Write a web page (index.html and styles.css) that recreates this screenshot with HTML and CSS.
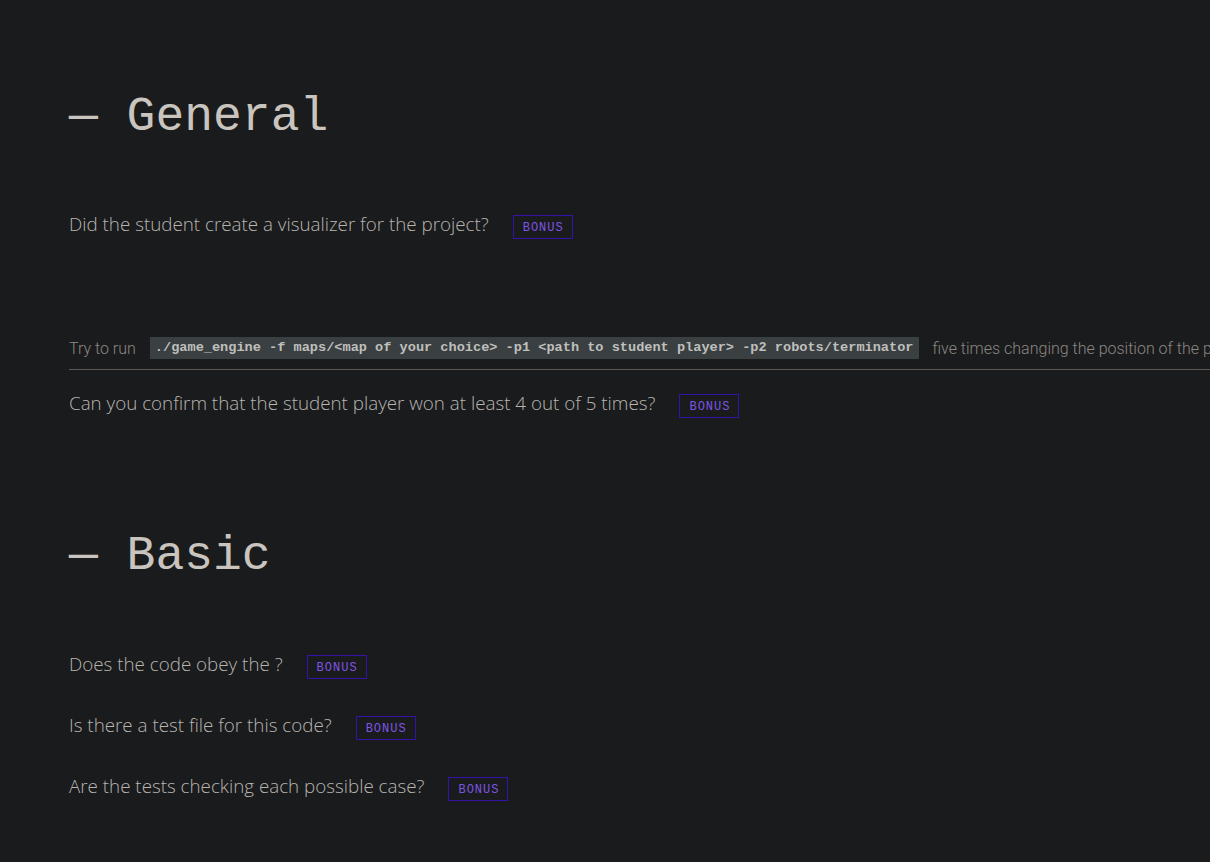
FILE: index.html
```html
<!DOCTYPE html>
<html lang="en">
<head>
<meta charset="utf-8">
<title>Audit</title>
<link rel="stylesheet" href="styles.css">
</head>
<body>
<main class="page">
  <section class="section">
    <h2 class="section-title">— General</h2>
    <div class="question first">
      <span class="question-text">Did the student create a visualizer for the project?</span>
      <span class="badge">BONUS</span>
    </div>
    <div class="check">
      <div class="instructions">
        <span class="instr-text">Try to run</span>
        <code class="code">./game_engine -f maps/&lt;map of your choice&gt; -p1 &lt;path to student player&gt; -p2 robots/terminator</code>
        <span class="instr-text">five times changing the position of the players each time so that the student player can be the p1 and the p2.</span>
      </div>
      <div class="question after-rule">
        <span class="question-text">Can you confirm that the student player won at least 4 out of 5 times?</span>
        <span class="badge">BONUS</span>
      </div>
    </div>
  </section>
  <section class="section second">
    <h2 class="section-title">— Basic</h2>
    <div class="question-list">
      <div class="question">
        <span class="question-text">Does the code obey the ?</span>
        <span class="badge">BONUS</span>
      </div>
      <div class="question">
        <span class="question-text">Is there a test file for this code?</span>
        <span class="badge">BONUS</span>
      </div>
      <div class="question">
        <span class="question-text">Are the tests checking each possible case?</span>
        <span class="badge">BONUS</span>
      </div>
    </div>
  </section>
</main>
</body>
</html>
```

FILE: styles.css
```css
html {
  overflow: hidden;
  background: #1a1b1d;
}

body {
  margin: 0;
  padding: 0;
  background: #1a1b1d;
  font-family: "Open Sans", Roboto, "Liberation Sans", sans-serif;
  color: #b3b0ab;
}

.page {
  padding: 87px 0 60px 69px;
}

.section-title {
  margin: 0;
  font-family: "Liberation Mono", "DejaVu Sans Mono", monospace;
  font-weight: 400;
  font-size: 48px;
  line-height: 60px;
  color: #c9c5be;
  white-space: nowrap;
}

.question {
  display: flex;
  align-items: center;
  gap: 24px;
  height: 24px;
}

.question.first {
  margin-top: 65px;
}

.question-text {
  font-size: 18.8px;
  font-weight: 300;
  color: #b8b5b0;
  white-space: nowrap;
}

.badge {
  box-sizing: border-box;
  height: 24px;
  display: inline-flex;
  align-items: center;
  padding: 2px 8px 0 9px;
  margin-top: 5px;
  border: 1px solid #3413a8;
  font-family: "Liberation Mono", "DejaVu Sans Mono", monospace;
  font-size: 12px;
  letter-spacing: 1px;
  color: #7d55e2;
}

.check {
  margin-top: 101px;
}

.instructions {
  display: flex;
  align-items: center;
  gap: 14px;
  white-space: nowrap;
  padding-bottom: 10px;
  border-bottom: 1px solid #5e5954;
}

.instr-text {
  font-family: Roboto, "Open Sans", sans-serif;
  font-size: 16px;
  font-weight: 300;
  color: #8b8782;
}

.code {
  display: inline-block;
  height: 22px;
  line-height: 22px;
  padding: 0 5px;
  background: #3a3f42;
  font-family: "Liberation Mono", "DejaVu Sans Mono", monospace;
  font-weight: 700;
  font-size: 13.6px;
  color: #bfbfbc;
}

.question.after-rule {
  margin-top: 21px;
}

.section.second {
  margin-top: 111px;
}

.question-list {
  margin-top: 66px;
  display: flex;
  flex-direction: column;
  gap: 37px;
}
```
